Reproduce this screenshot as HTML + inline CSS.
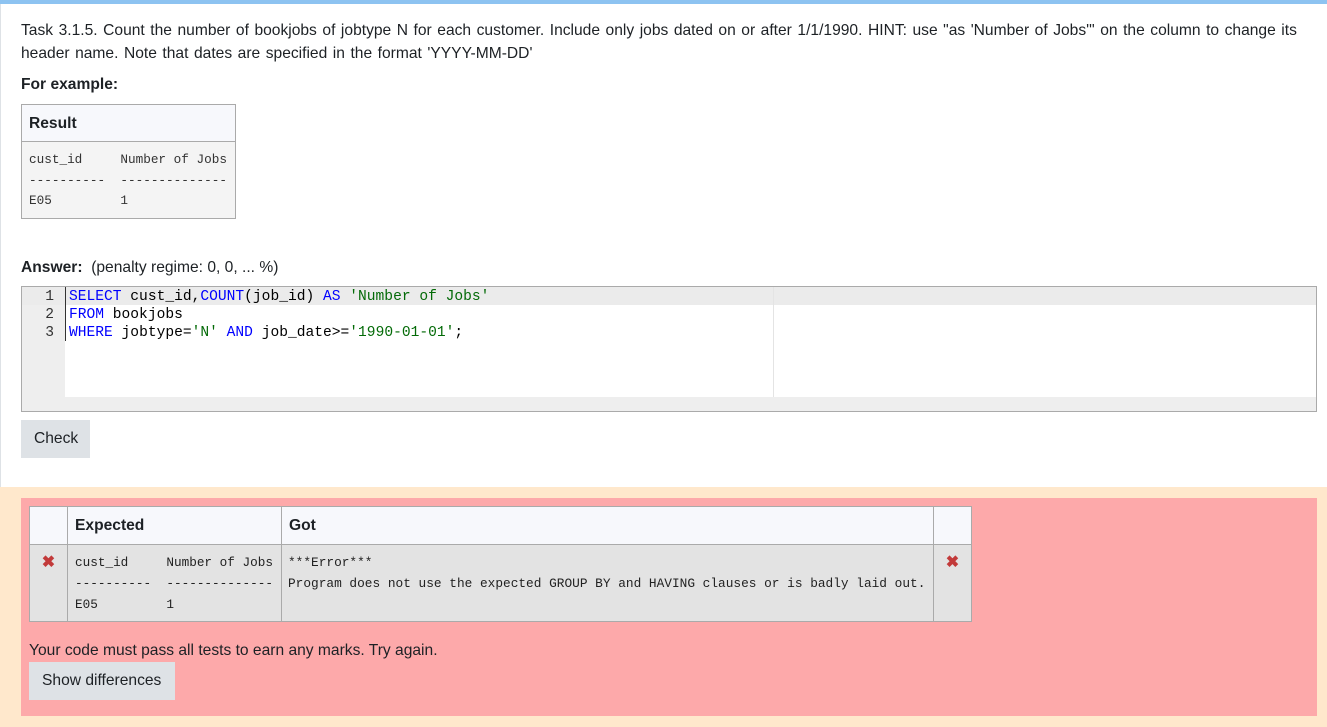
<!DOCTYPE html>
<html><head><meta charset="utf-8"><style>
*{margin:0;padding:0;box-sizing:border-box}
body{width:1327px;height:727px;position:relative;overflow:hidden;background:#fff;font-family:"Liberation Sans",sans-serif;color:#1d2125;font-size:15.6px}
.a{position:absolute;white-space:nowrap}
.m{font-family:"Liberation Mono",monospace}
.k{color:#0000ff}.s{color:#036a07}
</style></head><body>
<div class="a" style="left:0;top:0;width:1327px;height:4px;background:#8dc3f1"></div>
<div class="a" style="left:0;top:4px;width:1px;height:483px;background:#dee2e6"></div>
<div class="a" style="left:21px;top:19px;line-height:23px;word-spacing:1.2px">Task 3.1.5. Count the number of bookjobs of jobtype N for each customer. Include only jobs dated on or after 1/1/1990. HINT: use "as 'Number of Jobs'" on the column to change its<br>header name. Note that dates are specified in the format 'YYYY-MM-DD'</div>
<div class="a" style="left:21px;top:76px;font-weight:bold">For example:</div>
<div class="a" style="left:21px;top:104px;width:215px;height:115px;border:1px solid #aaa;background:#f4f4f4">
<div style="height:37px;background:#f7f8fc;border-bottom:1px solid #aaa;padding:10px 0 0 7px;font-weight:bold">Result</div>
<div class="m" style="padding:8px 0 0 7px;font-size:12.7px;line-height:20.5px;white-space:pre;color:#333">cust_id     Number of Jobs
----------  --------------
E05         1</div></div>
<div class="a" style="left:21px;top:259px"><b>Answer:</b>&nbsp; (penalty regime: 0, 0, ... %)</div>
<div class="a" style="left:21px;top:286px;width:1296px;height:126px;border:1px solid #aaa;background:#eee">
<div class="a" style="left:43px;top:18px;width:1251px;height:92px;background:#fff"></div>
<div class="a" style="left:0;top:0;width:1294px;height:18px;background:#ebebeb"></div>
<div class="a" style="left:43px;top:0;width:1px;height:54px;background:#333"></div>
<div class="a" style="left:751px;top:0;width:1px;height:110px;background:#e4e4e4"></div>
<div class="a m" style="left:0;top:1px;width:32px;text-align:right;font-size:14.6px;line-height:18px;color:#333">1<br>2<br>3</div>
<div class="a m" style="left:47px;top:1px;font-size:14.6px;line-height:18px;white-space:pre;color:#000"><span class="k">SELECT</span> cust_id,<span class="k">COUNT</span>(job_id) <span class="k">AS</span> <span class="s">'Number of Jobs'</span>
<span class="k">FROM</span> bookjobs
<span class="k">WHERE</span> jobtype=<span class="s">'N'</span> <span class="k">AND</span> job_date&gt;=<span class="s">'1990-01-01'</span>;</div>
</div>
<div class="a" style="left:21px;top:420px;width:69px;height:38px;background:#dee2e6;padding:10px 0 0 13px">Check</div>
<div class="a" style="left:0;top:487px;width:1327px;height:240px;background:#ffe8cc"></div>
<div class="a" style="left:21px;top:498px;width:1296px;height:218px;background:#fda9aa"></div>
<table class="a" style="left:29px;top:506px;border-collapse:collapse;background:#e3e3e3">
<tr style="height:38px;background:#f7f8fc;font-weight:bold"><td style="width:38px;border:1px solid #aaa"></td><td style="width:214px;border:1px solid #aaa;padding-left:7px">Expected</td><td style="width:652px;border:1px solid #aaa;padding-left:7px">Got</td><td style="width:38px;border:1px solid #aaa"></td></tr>
<tr style="height:77px;vertical-align:top"><td style="border:1px solid #aaa;color:#c23a3a;font-weight:bold;text-align:center;padding-top:7px;font-size:16px">✖</td>
<td class="m" style="border:1px solid #aaa;padding:7px 0 0 7px;font-size:12.7px;line-height:21px;white-space:pre;color:#222">cust_id     Number of Jobs
----------  --------------
E05         1</td>
<td class="m" style="border:1px solid #aaa;padding:7px 0 0 6px;font-size:12.8px;line-height:21px;white-space:pre;color:#222">***Error***
Program does not use the expected GROUP BY and HAVING clauses or is badly laid out.</td>
<td style="border:1px solid #aaa;color:#c23a3a;font-weight:bold;text-align:center;padding-top:7px;font-size:16px">✖</td></tr></table>
<div class="a" style="left:29px;top:642px">Your code must pass all tests to earn any marks. Try again.</div>
<div class="a" style="left:29px;top:662px;width:146px;height:38px;background:#dee2e6;padding:10px 0 0 13px">Show differences</div>
</body></html>
